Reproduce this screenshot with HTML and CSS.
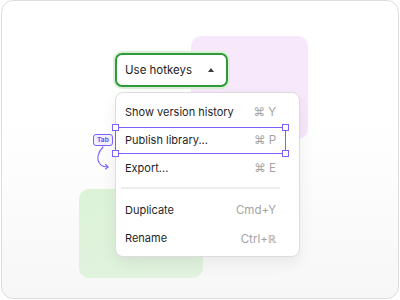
FILE: index.html
```html
<!DOCTYPE html>
<html lang="en">
<head>
    <meta charset="UTF-8">
    <meta name="viewport" content="width=device-width, initial-scale=1.0">
    <title>Use hotkeys</title>
    <link rel="stylesheet" href="styles.css">
</head>
<body>
    <div class="frame">
        <div class="blob blob-purple"></div>
        <div class="blob blob-green"></div>

        <div class="stack">
            <button class="trigger">
                <span>Use hotkeys</span>
                <span class="caret"></span>
            </button>

            <div class="menu">
                <div class="item">
                    <span>Show version history</span>
                    <span class="keys">⌘ Y</span>
                </div>
                <div class="item selected">
                    <span>Publish library...</span>
                    <span class="keys">⌘ P</span>
                    <div class="select-box">
                        <i class="handle tl"></i>
                        <i class="handle tr"></i>
                        <i class="handle bl"></i>
                        <i class="handle br"></i>
                    </div>
                    <div class="tab-hint">
                        <span class="tab-badge">Tab</span>
                        <svg class="tab-arrow" width="16" height="24" viewBox="0 0 16 24" fill="none">
                            <path d="M8 1 C 3 6, 1 13, 5 18 C 7 20.5, 10 21, 13 21" stroke="#7b61ff" stroke-width="1.1" stroke-linecap="round"/>
                            <path d="M10.5 18.5 L13 21 L10.5 23" stroke="#7b61ff" stroke-width="1.1" stroke-linecap="round" stroke-linejoin="round"/>
                        </svg>
                    </div>
                </div>
                <div class="item">
                    <span>Export...</span>
                    <span class="keys">⌘ E</span>
                </div>
                <div class="separator"></div>
                <div class="item">
                    <span>Duplicate</span>
                    <span class="keys">Cmd+Y</span>
                </div>
                <div class="item">
                    <span>Rename</span>
                    <span class="keys">Ctrl+ℝ</span>
                </div>
            </div>
        </div>
    </div>
</body>
</html>
```

FILE: styles.css
```css
* {
    margin: 0;
    padding: 0;
    box-sizing: border-box;
}

body {
    background: #ffffff;
    font-family: 'Inter', 'Noto Sans', 'DejaVu Sans', sans-serif;
    width: 400px;
    height: 300px;
    overflow: hidden;
}

.frame {
    position: relative;
    width: 398px;
    height: 299px;
    margin-left: 1px;
    border: 1px solid #dedede;
    border-radius: 12px;
    background: linear-gradient(180deg, #ffffff 0%, #ffffff 40%, #f7f7f7 100%);
    overflow: hidden;
}

/* decorative shapes behind the menu */
.blob {
    position: absolute;
    border-radius: 10px;
}

.blob-purple {
    left: 189px;
    top: 35px;
    width: 117px;
    height: 103px;
    background: #f8e8fc;
}

.blob-green {
    left: 77px;
    top: 188px;
    width: 124px;
    height: 89px;
    background: linear-gradient(160deg, #dcf3d8 0%, #e2f3df 100%);
}

.stack {
    position: relative;
    margin-left: 113px;
    padding-top: 52px;
    width: 185px;
}

.trigger {
    display: flex;
    align-items: center;
    justify-content: space-between;
    width: 113px;
    height: 34px;
    padding: 0 12px 0 8px;
    border: 2px solid #2f9a3b;
    border-radius: 7px;
    background: #ffffff;
    box-shadow: 0 0 0 2px #d9f0d6;
    font-family: inherit;
    font-size: 11.5px;
    color: #1d1d1d;
}

.caret {
    width: 0;
    height: 0;
    border-left: 3px solid transparent;
    border-right: 3px solid transparent;
    border-bottom: 4px solid #3a3a3a;
}

.menu {
    margin-top: 5px;
    width: 185px;
    padding: 5px 0 4px;
    background: #ffffff;
    border: 1px solid #dcdcdc;
    border-radius: 8px;
    box-shadow: 0 6px 16px rgba(0, 0, 0, 0.07);
}

.item {
    position: relative;
    display: flex;
    align-items: center;
    justify-content: space-between;
    height: 28px;
    padding: 0 23px 0 9px;
    font-size: 11px;
    color: #1f1f1f;
}

.keys {
    color: #a3a3a3;
    font-size: 11.5px;
}

.separator {
    height: 2px;
    margin: 5px 19px 7px 5px;
    background: #eeeeee;
}

.select-box {
    position: absolute;
    left: -1px;
    top: 1px;
    width: 171px;
    height: 27px;
    border: 1.5px solid #7b61ff;
}

.handle {
    position: absolute;
    width: 7px;
    height: 7px;
    background: #ffffff;
    border: 1px solid #7b61ff;
}

.handle.tl { left: -4px; top: -4px; }
.handle.tr { right: -4px; top: -4px; }
.handle.bl { left: -4px; bottom: -4px; }
.handle.br { right: -4px; bottom: -4px; }

.tab-hint {
    position: absolute;
    left: -23px;
    top: 8px;
    display: flex;
    flex-direction: column;
    align-items: flex-start;
}

.tab-badge {
    display: block;
    padding: 1px 3px;
    border: 1px solid #7b61ff;
    border-radius: 3px;
    background: #f3f0ff;
    color: #6a50f0;
    font-size: 6.5px;
    font-weight: 700;
    line-height: 8px;
}

.tab-arrow {
    margin-left: 2px;
}
```
